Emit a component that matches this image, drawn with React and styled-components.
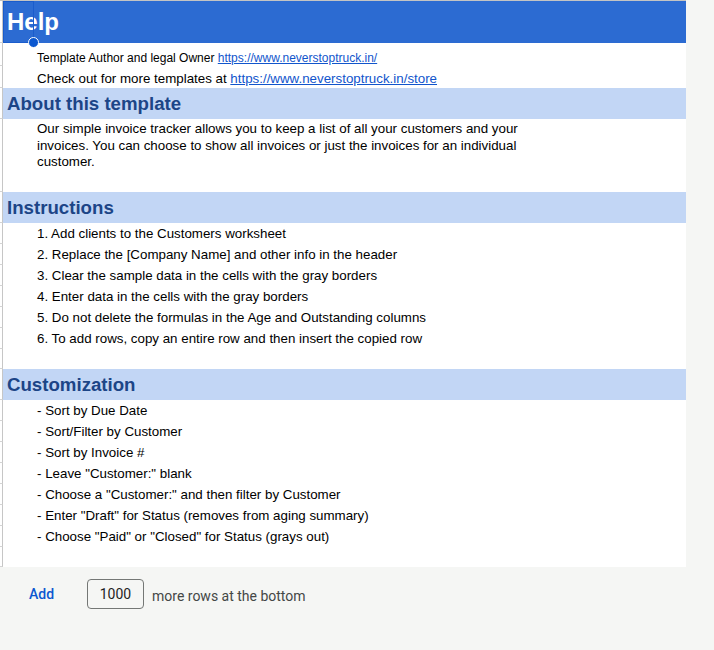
import styled, { createGlobalStyle } from "styled-components";

const GlobalStyle = createGlobalStyle`
  html, body {
    margin: 0;
    padding: 0;
    background: #f5f6f4;
  }
  body {
    font-family: "Liberation Sans", Arial, sans-serif;
    color: #000;
  }
`;

const Page = styled.div`
  width: 714px;
  min-height: 650px;
  background: #f5f6f4;
`;

const Sheet = styled.div`
  width: 686px;
  background: #fff;
  border-top: 1px solid #c4c4c4;
  display: flex;
  flex-direction: column;
`;

const Row = styled.div`
  position: relative;
  display: flex;
  height: ${(p) => p.$h}px;
`;

const Gutter = styled.div`
  flex: 0 0 3px;
  box-sizing: border-box;
  border-right: 1px solid #c6c6c6;
  border-bottom: 1px solid #d4d4d4;
`;

const Cell = styled.div`
  flex: 1;
  display: flex;
  align-items: ${(p) => p.$align || "flex-end"};
  padding: ${(p) => p.$pad || "0 0 3px 34px"};
  background: ${(p) => p.$bg || "transparent"};
  font-size: ${(p) => p.$size || 13.33}px;
  line-height: 1.15;
  white-space: nowrap;
`;

const Title = styled.span`
  font-size: 24px;
  font-weight: bold;
  color: #fff;
`;

const Heading = styled.span`
  font-size: 18.67px;
  font-weight: bold;
  color: #1c4587;
`;

const Link = styled.a`
  color: #1155cc;
  text-decoration: underline;
`;

const Para = styled.p`
  margin: 0;
  font-size: 13.33px;
  line-height: 16.6px;
`;

const Selection = styled.div`
  position: absolute;
  left: 3px;
  top: 0;
  width: 31px;
  height: 42px;
  box-sizing: border-box;
  border: 1px solid #1a5ccc;
`;

const Handle = styled.div`
  position: absolute;
  left: 28px;
  top: 36px;
  width: 9px;
  height: 9px;
  border-radius: 50%;
  background: #0b57d0;
  border: 1px solid #fff;
`;

const AddBar = styled.div`
  display: flex;
  align-items: center;
  padding: 12px 0 0 29px;
  font-family: Roboto, "Liberation Sans", sans-serif;
  font-size: 14px;
`;

const AddButton = styled.span`
  color: #0b57d0;
  font-weight: 500;
  width: 58px;
`;

const CountBox = styled.div`
  width: 57px;
  height: 30px;
  box-sizing: border-box;
  border: 1px solid #747775;
  border-radius: 4px;
  display: flex;
  align-items: center;
  justify-content: center;
  color: #1f1f1f;
`;

const AddLabel = styled.span`
  margin: 4px 0 0 8px;
  color: #444746;
`;

const instructions = [
  "1. Add clients to the Customers worksheet",
  "2. Replace the [Company Name] and other info in the header",
  "3. Clear the sample data in the cells with the gray borders",
  "4. Enter data in the cells with the gray borders",
  "5. Do not delete the formulas in the Age and Outstanding columns",
  "6. To add rows, copy an entire row and then insert the copied row",
];

const customization = [
  "- Sort by Due Date",
  "- Sort/Filter by Customer",
  "- Sort by Invoice #",
  '- Leave "Customer:" blank',
  '- Choose a "Customer:" and then filter by Customer',
  '- Enter "Draft" for Status (removes from aging summary)',
  '- Choose "Paid" or "Closed" for Status (grays out)',
];

const SectionHeader = ({ children }) => (
  <Row $h={31}>
    <Gutter />
    <Cell $align="center" $pad="0 0 0 4px" $bg="#c2d6f5">
      <Heading>{children}</Heading>
    </Cell>
  </Row>
);

const TextRow = ({ children, h = 21, size, pad }) => (
  <Row $h={h}>
    <Gutter />
    <Cell $size={size} $pad={pad}>
      {children}
    </Cell>
  </Row>
);

export default function App() {
  return (
    <Page>
      <GlobalStyle />
      <Sheet>
        <Row $h={42}>
          <Gutter />
          <Cell $align="center" $pad="0 0 0 4px" $bg="#2c6bd2">
            <Title>Help</Title>
          </Cell>
          <Selection />
          <Handle />
        </Row>
        <TextRow h={23} size={12} pad="0 0 0 34px">
          Template Author and legal Owner&nbsp;
          <Link href="#">https://www.neverstoptruck.in/</Link>
        </TextRow>
        <TextRow h={22} pad="0 0 2px 34px">
          Check out for more templates at&nbsp;
          <Link href="#">https://www.neverstoptruck.in/store</Link>
        </TextRow>

        <SectionHeader>About this template</SectionHeader>
        <Row $h={73}>
          <Gutter />
          <Cell $align="flex-start" $pad="2px 0 0 34px">
            <Para>
              Our simple invoice tracker allows you to keep a list of all your customers and your
              <br />
              invoices. You can choose to show all invoices or just the invoices for an individual
              <br />
              customer.
            </Para>
          </Cell>
        </Row>

        <SectionHeader>Instructions</SectionHeader>
        {instructions.map((line) => (
          <TextRow key={line}>{line}</TextRow>
        ))}
        <TextRow h={20} />

        <SectionHeader>Customization</SectionHeader>
        {customization.map((line) => (
          <TextRow key={line}>{line}</TextRow>
        ))}
        <TextRow h={20} />
      </Sheet>

      <AddBar>
        <AddButton>Add</AddButton>
        <CountBox>1000</CountBox>
        <AddLabel>more rows at the bottom</AddLabel>
      </AddBar>
    </Page>
  );
}
